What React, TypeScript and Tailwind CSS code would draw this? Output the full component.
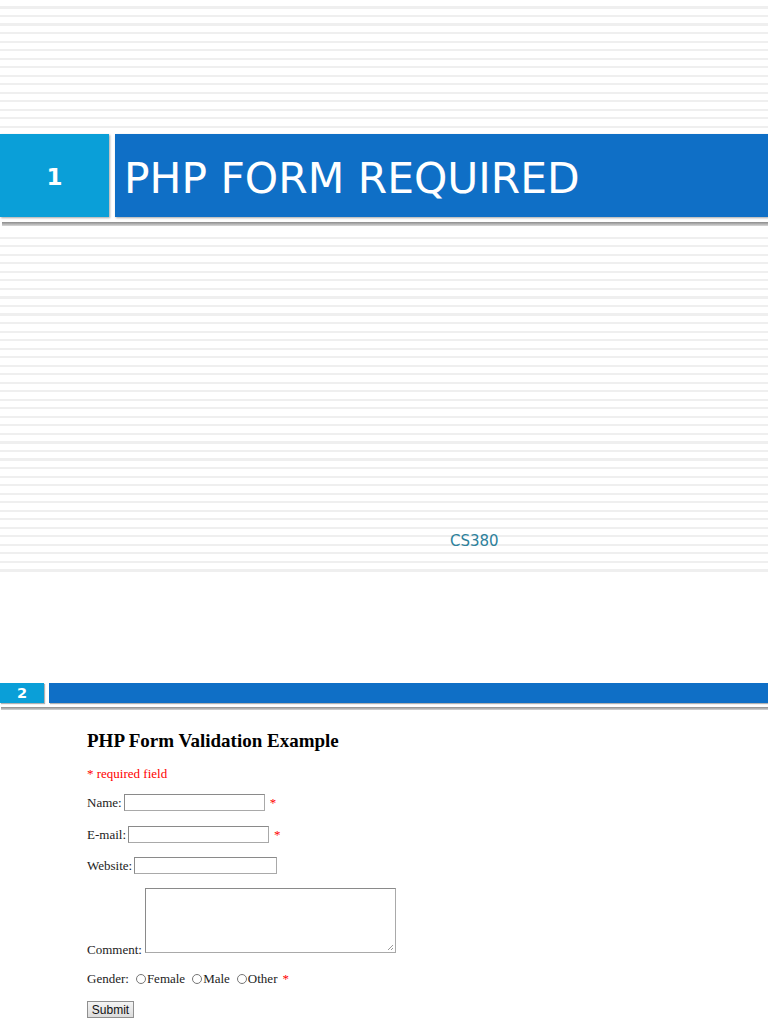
import React from "react";

function Radio({ label }: { label: string }) {
  return (
    <span className="flex items-center">
      <span className="inline-block w-[10px] h-[10px] rounded-full border border-[#767676] bg-white mr-[1px]" />
      <span>{label}</span>
    </span>
  );
}

function Input({ w }: { w: string }) {
  return <span className={`inline-block h-[17px] border border-[#a9a9a9] border-t-[#8a8a8a] border-l-[#8a8a8a] bg-white ${w}`} />;
}

export default function App() {
  return (
    <div className="w-[768px] bg-white overflow-hidden">
      {/* Slide 1 */}
      <div className="h-[576px] flex flex-col bg-[repeating-linear-gradient(to_bottom,transparent_0px,transparent_6.4px,#efefef_6.4px,#efefef_8.53px)] bg-no-repeat bg-[length:100%_572px]">
        <div className="mt-[130px] bg-white pt-[4px] pb-[4px]">
          <div className="flex h-[83px] gap-[6px]">
            <div className="w-[109px] bg-[#0a9fd8] flex items-center justify-center pt-[3px] shadow-[1px_1px_2px_rgba(0,0,0,0.35)]">
              <span className="font-['DejaVu_Sans',sans-serif] font-bold text-white text-[23px] leading-[23px]">1</span>
            </div>
            <div className="flex-1 bg-[#0f6fc6] pl-[9px] pt-[24px] shadow-[1px_1px_2px_rgba(0,0,0,0.35)]">
              <span className="font-['DejaVu_Sans',sans-serif] text-white text-[42.4px] leading-[42px] whitespace-nowrap">PHP FORM REQUIRED</span>
            </div>
          </div>
          <div className="mt-[5px] h-[4px] ml-[2px] bg-gradient-to-b from-[#8c8c8c] to-[#d9d9d9]" />
        </div>
        <div className="mt-[298px] ml-[450px]">
          <span className="font-['DejaVu_Sans',sans-serif] text-[15px] leading-[18px] text-[#2d819c]">CS380</span>
        </div>
      </div>

      {/* Slide 2 */}
      <div className="pt-[107px] pb-[10px]">
        <div className="flex h-[20px] gap-[5px]">
          <div className="w-[44px] bg-[#0a9fd8] flex items-center justify-center shadow-[1px_1px_1px_rgba(0,0,0,0.3)]">
            <span className="font-['DejaVu_Sans',sans-serif] font-bold text-white text-[14.5px] leading-[15px]">2</span>
          </div>
          <div className="flex-1 bg-[#0f6fc6] shadow-[1px_1px_1px_rgba(0,0,0,0.3)]" />
        </div>
        <div className="mt-[4px] h-[3px] ml-[1px] bg-gradient-to-b from-[#8c8c8c] to-[#d6d6d6]" />

        <div className="ml-[87px] font-['Liberation_Serif',serif] text-[13px] leading-[16px] text-[#222]">
          <h1 className="mt-[20px] text-[19px] leading-[22px] font-bold text-black">PHP Form Validation Example</h1>
          <p className="mt-[14px] text-[#ff0000]">* required field</p>
          <div className="mt-[12px] flex items-center h-[17px]">
            <span className="mr-[2px]">Name:</span>
            <Input w="w-[141px]" />
            <span className="ml-[5px] text-[#ff0000]">*</span>
          </div>
          <div className="mt-[15px] flex items-center h-[17px]">
            <span className="mr-[2px]">E-mail:</span>
            <Input w="w-[141px]" />
            <span className="ml-[5px] text-[#ff0000]">*</span>
          </div>
          <div className="mt-[14px] flex items-center h-[17px]">
            <span className="mr-[2px]">Website:</span>
            <Input w="w-[143px]" />
          </div>
          <div className="mt-[14px] flex items-end">
            <span className="mr-[3px] mb-[-5px]">Comment:</span>
            <span className="relative inline-block w-[251px] h-[65px] border border-[#a9a9a9] border-t-[#8a8a8a] border-l-[#8a8a8a] bg-white">
              <svg className="absolute right-[1px] bottom-[1px]" width="7" height="7" viewBox="0 0 7 7">
                <path d="M6 1 L1 6 M6 4 L4 6" stroke="#999" strokeWidth="1" />
              </svg>
            </span>
          </div>
          <div className="mt-[18px] flex items-center gap-[7px]">
            <span>Gender:</span>
            <Radio label="Female" />
            <Radio label="Male" />
            <span className="flex items-center">
              <Radio label="Other" />
              <span className="ml-[5px] text-[#ff0000]">*</span>
            </span>
          </div>
          <div className="mt-[14px]">
            <span className="inline-flex items-center justify-center w-[47px] h-[17px] border border-[#8f8f8f] bg-gradient-to-b from-[#f4f4f4] to-[#dcdcdc] text-[12px] font-['Liberation_Sans',sans-serif] text-[#111]">Submit</span>
          </div>
        </div>
      </div>
    </div>
  );
}
